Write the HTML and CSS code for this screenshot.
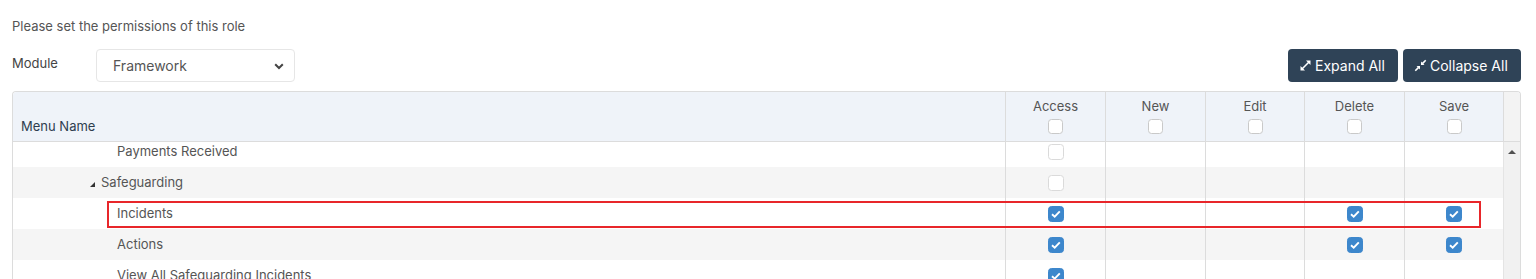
FILE: index.html
```html
<!DOCTYPE html>
<html>
<head>
<meta charset="utf-8">
<link rel="stylesheet" href="styles.css">
</head>
<body>
<div class="page">
  <p class="intro">Please set the permissions of this role</p>
  <div class="toolbar">
    <div class="module">
      <span class="module-label">Module</span>
      <div class="select">
        <span>Framework</span>
        <svg class="chev" width="10" height="7" viewBox="0 0 10 7"><path d="M1.2 1.2 L5 5 L8.8 1.2" fill="none" stroke="#444" stroke-width="2"/></svg>
      </div>
    </div>
    <div class="buttons">
      <button class="btn">
        <svg width="13" height="13" viewBox="0 0 13 13"><path d="M2.5 10.5 L10.5 2.5" stroke="#fff" stroke-width="1.6"/><path d="M7 1.5 H11.5 V6 Z" fill="#fff"/><path d="M1.5 7 V11.5 H6 Z" fill="#fff"/></svg>
        Expand All</button>
      <button class="btn">
        <svg width="13" height="13" viewBox="0 0 13 13"><path d="M1.3 11.7 L4.6 8.4 M8.4 4.6 L11.7 1.3" stroke="#fff" stroke-width="1.6"/><path d="M6 7 H2.5 L6 10.5 Z" fill="#fff"/><path d="M7 6 H10.5 L7 2.5 Z" fill="#fff"/></svg>
        Collapse All</button>
    </div>
  </div>

  <div class="grid">
    <div class="head">
      <div class="hname">Menu Name</div>
      <div class="hcol"><span>Access</span><i class="cb"></i></div>
      <div class="hcol"><span>New</span><i class="cb"></i></div>
      <div class="hcol"><span>Edit</span><i class="cb"></i></div>
      <div class="hcol"><span>Delete</span><i class="cb"></i></div>
      <div class="hcol"><span>Save</span><i class="cb"></i></div>
      <div class="hgap"></div>
    </div>
    <div class="body">
      <div class="viewport">
        <div class="rows">
          <div class="row">
            <div class="name l2">Payments Received</div>
            <div class="cell"><i class="cb dis"></i></div><div class="cell"></div><div class="cell"></div><div class="cell"></div><div class="cell"></div>
          </div>
          <div class="row alt">
            <div class="name l1"><span class="tri"></span>Safeguarding</div>
            <div class="cell"><i class="cb dis"></i></div><div class="cell"></div><div class="cell"></div><div class="cell"></div><div class="cell"></div>
          </div>
          <div class="row sel">
            <div class="name l2">Incidents</div>
            <div class="cell"><i class="cb on"></i></div><div class="cell"></div><div class="cell"></div><div class="cell"><i class="cb on"></i></div><div class="cell"><i class="cb on"></i></div>
            <div class="highlight"></div>
          </div>
          <div class="row alt">
            <div class="name l2">Actions</div>
            <div class="cell"><i class="cb on"></i></div><div class="cell"></div><div class="cell"></div><div class="cell"><i class="cb on"></i></div><div class="cell"><i class="cb on"></i></div>
          </div>
          <div class="row">
            <div class="name l2">View All Safeguarding Incidents</div>
            <div class="cell"><i class="cb on"></i></div><div class="cell"></div><div class="cell"></div><div class="cell"></div><div class="cell"></div>
          </div>
        </div>
      </div>
      <div class="scrollbar"><span class="up"></span></div>
    </div>
  </div>
</div>
</body>
</html>
```

FILE: styles.css
```css
* { box-sizing: border-box; }
html, body { margin: 0; padding: 0; background: #fff; }
body {
  font-family: Inter, "Noto Sans", "Liberation Sans", sans-serif;
  font-size: 13px;
  color: #555;
  overflow: hidden;
  height: 279px;
}
.page { padding: 0 15px 0 12px; }
.intro { margin: 0; padding-top: 18px; line-height: 17px; height: 49px; }
.toolbar {
  display: flex;
  justify-content: space-between;
  align-items: flex-start;
  height: 42px;
}
.module { display: flex; align-items: flex-start; }
.module-label { width: 84px; padding-top: 6px; line-height: 17px; color: #444; }
.select {
  width: 199px;
  height: 33px;
  border: 1px solid #e6e6e6;
  border-radius: 4px;
  display: flex;
  align-items: center;
  justify-content: space-between;
  padding: 0 10px 0 16px;
  font-size: 14px;
  color: #555;
}
.chev { margin-top: 1px; }
.buttons { display: flex; gap: 5px; }
.btn {
  height: 33px;
  background: #2f4357;
  color: #fff;
  border: 0;
  border-radius: 4px;
  font-family: Inter, "Noto Sans", "Liberation Sans", sans-serif;
  font-size: 14px;
  padding: 0 12px 0 11px;
  display: flex;
  align-items: center;
  gap: 3px;
}
.btn:first-child { width: 110px; }
.btn:last-child { width: 118px; }

.grid {
  border: 1px solid #dcdcdc;
  border-bottom: 0;
  border-radius: 4px 4px 0 0;
  width: 1509px;
}
.head {
  display: grid;
  grid-template-columns: 992px 100px 100px 99px 100px 99px 17px;
  height: 50px;
  background: #eff3f9;
  border-bottom: 1px solid #dcdcdc;
  border-radius: 4px 4px 0 0;
}
.hname {
  display: flex;
  align-items: flex-end;
  padding: 0 0 7px 8px;
  color: #2e3d4f;
}
.hcol {
  border-left: 1px solid #dcdcdc;
  display: flex;
  flex-direction: column;
  align-items: center;
  padding-top: 6px;
}
.hcol span { line-height: 17px; }
.hcol .cb { margin-top: 4px; }
.hgap { border-left: 1px solid #dcdcdc; background: #f3f3f3; border-radius: 0 4px 0 0; }

.cb {
  display: inline-block;
  width: 15px;
  height: 15px;
  border: 1px solid #c9c9c9;
  border-radius: 3.5px;
  background: #fff;
}
.row .cb { width: 16px; height: 16px; }
.cb.dis { border-color: #dadada; }
.cb.on {
  background: #3d87cc url("data:image/svg+xml;utf8,<svg xmlns='http://www.w3.org/2000/svg' width='16' height='16' viewBox='0 0 16 16'><path d='M4 8.2 L6.7 10.6 L11.8 5.3' fill='none' stroke='white' stroke-width='1.9'/></svg>") center/16px 16px no-repeat;
  border-color: #3d87cc;
}

.body { display: flex; height: 138px; }
.viewport { width: 1491px; overflow: hidden; }
.rows { margin-top: -6px; }
.row {
  position: relative;
  display: grid;
  grid-template-columns: 992px 100px 100px 99px 100px 99px;
  height: 31px;
  background: #fff;
}
.row.alt { background: #f5f5f5; }
.name { display: flex; align-items: center; line-height: 17px; }
.name.l1 { padding-left: 77px; }
.name.l2 { padding-left: 104px; }
.tri {
  width: 0; height: 0;
  border-left: 5px solid transparent;
  border-bottom: 5px solid #333;
  margin: 3px 6px 0 0;
}
.cell {
  border-left: 1px solid #dcdcdc;
  display: flex;
  align-items: center;
  justify-content: center;
}
.highlight {
  position: absolute;
  left: 94px;
  width: 1374px;
  top: 3px;
  height: 27px;
  border: 2px solid #e8262a;
  pointer-events: none;
}
.scrollbar {
  width: 17px;
  background: #f1f1f1;
  border-left: 1px solid #e4e4e4;
  display: flex;
  justify-content: center;
  padding-top: 8px;
}
.up {
  width: 0; height: 0;
  border-left: 4px solid transparent;
  border-right: 4px solid transparent;
  border-bottom: 4px solid #505050;
}
```
